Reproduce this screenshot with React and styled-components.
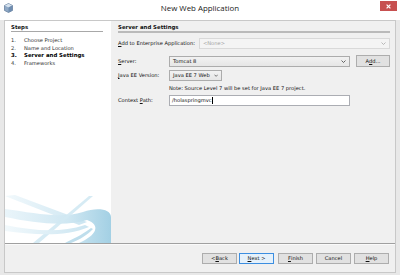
import React from "react";
import styled, { createGlobalStyle } from "styled-components";

const GlobalStyle = createGlobalStyle`
  html, body { margin: 0; padding: 0; }
  body {
    width: 400px; height: 275px; overflow: hidden; background: #fff;
    font-family: "DejaVu Sans", Verdana, sans-serif;
    color: #111;
  }
  #root { width: 400px; height: 275px; }
`;

const Window = styled.div`
  width: 400px; height: 275px; box-sizing: border-box;
  display: flex; flex-direction: column;
  background: #e8e8e8;
`;

const TitleBar = styled.div`
  height: 20px; flex: none; background: #fff;
  display: grid; grid-template-columns: 1fr auto 1fr; align-items: start;
`;

const AppIcon = styled.svg`
  display: block; margin: 3px 0 0 4px;
`;

const Title = styled.div`
  font-family: "Open Sans", "Noto Sans", sans-serif;
  font-size: 7.9px; line-height: 10px; color: #222;
  margin-top: 3px; white-space: nowrap;
`;

const CloseButton = styled.div`
  justify-self: end; margin: 1px 3px 0 0;
  width: 17px; height: 10px; background: #c75050;
  display: flex; align-items: center; justify-content: center;
`;

const Frame = styled.div`
  flex: 1; min-height: 0; display: flex; padding: 0 4px 2px;
`;

const Client = styled.div`
  flex: 1; min-width: 0; display: flex; flex-direction: column;
  background: #f0f0f0; border: 1px solid #c8c8c8;
`;

const Main = styled.div`
  flex: 1; min-height: 0; display: flex;
`;

const StepsPanel = styled.div`
  width: 106px; flex: none; box-sizing: border-box;
  background: #fff; display: flex; flex-direction: column;
  padding-top: 2px; overflow: hidden;
`;

const StepsTitle = styled.div`
  margin: 0 8px 0 6px; font-weight: bold; font-size: 5.4px; line-height: 8px;
  border-bottom: 1px solid #a8a8a8; color: #111;
`;

const StepList = styled.ol`
  list-style: none; margin: 5px 0 0 6px; padding: 0;
`;

const Step = styled.li`
  display: flex; font-size: ${p => (p.$current ? "5.4px" : "5.15px")};
  font-weight: ${p => (p.$current ? "bold" : "normal")};
  line-height: 7.6px; color: ${p => (p.$current ? "#000" : "#2e2e2e")};
  white-space: nowrap;
`;

const StepNo = styled.span`
  width: 13px; flex: none;
`;

const Swoosh = styled.svg`
  display: block; margin-top: auto; flex: none;
`;

const Content = styled.div`
  flex: 1; min-width: 0; padding: 2px 5px 0 7px;
  display: flex; flex-direction: column;
`;

const SectionTitle = styled.div`
  font-weight: bold; font-size: 5.4px; line-height: 8px; color: #111;
  border-bottom: 2px solid #bababa;
`;

const EnterpriseRow = styled.div`
  display: flex; align-items: center; gap: 4px; margin-top: 5px;
`;

const Label = styled.label`
  font-size: 5.15px; line-height: 7px; white-space: nowrap; color: #111;
`;

const Key = styled.span`
  text-decoration: underline; text-underline-offset: 0.5px;
  text-decoration-thickness: 0.5px;
`;

const Grid = styled.div`
  display: grid; grid-template-columns: 45px 1fr 34px;
  column-gap: 6px; row-gap: 3px; margin-top: 6px; align-items: center;
`;

const Combo = styled.div`
  box-sizing: border-box; height: 11px;
  width: ${p => (p.$width ? p.$width + "px" : "auto")};
  flex: ${p => (p.$grow ? 1 : "none")};
  display: flex; align-items: center; justify-content: space-between;
  padding: 0 3px 0 3px; gap: 4px;
  font-size: 5.15px; line-height: 7px; white-space: nowrap;
  border: 1px solid ${p => (p.$disabled ? "#d9d9d9" : "#acacac")};
  background: ${p => (p.$disabled ? "#f4f4f4" : "linear-gradient(#f2f2f2, #e6e6e6)")};
  color: ${p => (p.$disabled ? "#a3a3a3" : "#111")};
`;

const Chevron = ({ color }) => (
  <svg width="5" height="3" viewBox="0 0 5 3">
    <polyline points="0.5,0.5 2.5,2.5 4.5,0.5" fill="none" stroke={color} strokeWidth="0.8" />
  </svg>
);

const SmallButton = styled.div`
  box-sizing: border-box; height: 12px;
  display: flex; align-items: center; justify-content: center;
  font-size: 5.15px; line-height: 7px; white-space: nowrap;
  border: 1px solid #adadad; background: #e1e1e1;
`;

const Note = styled.div`
  grid-column: 2 / 4; font-size: 5.15px; line-height: 8px; white-space: nowrap;
  color: #111;
`;

const TextField = styled.div`
  box-sizing: border-box; height: 11px; display: flex; align-items: center;
  padding: 0 2px; font-size: 5.15px; line-height: 7px; white-space: nowrap;
  border: 1px solid #abadb3; background: #fff;
`;

const Caret = styled.span`
  display: inline-block; width: 1px; height: 7px; background: #000; margin-left: 0.5px;
`;

const Separator = styled.div`
  flex: none; height: 1px; background: #a0a0a0; border-bottom: 1px solid #fafafa;
`;

const Footer = styled.div`
  flex: none; height: 27px; box-sizing: border-box;
  display: flex; justify-content: flex-end; align-items: flex-start;
  padding: 8px 6px 0 0;
`;

const DialogButton = styled.div`
  box-sizing: border-box; width: 35px; height: 11px;
  margin-left: ${p => p.$gap}px;
  display: flex; align-items: center; justify-content: center;
  font-size: 5.15px; line-height: 7px; white-space: nowrap; color: #111;
  border: 1px solid ${p => (p.$default ? "#3c8ee0" : "#adadad")};
  background: ${p => (p.$default ? "#e5f1fb" : "#e1e1e1")};
`;

const steps = [
  { n: "1.", t: "Choose Project" },
  { n: "2.", t: "Name and Location" },
  { n: "3.", t: "Server and Settings", current: true },
  { n: "4.", t: "Frameworks" },
];

export default function App() {
  return (
    <>
      <GlobalStyle />
      <Window>
        <TitleBar>
          <AppIcon width="9" height="10" viewBox="0 0 9 10">
            <path d="M4.5 0.5 L8.5 2.5 L8.5 7.5 L4.5 9.5 L0.5 7.5 L0.5 2.5 Z" fill="#8fa9c6" stroke="#5d7696" strokeWidth="0.7" />
            <path d="M0.8 2.6 L4.5 4.5 L8.2 2.6 L4.5 0.8 Z" fill="#d6e2ee" />
            <path d="M4.5 4.5 L8.2 2.6 L8.2 7.4 L4.5 9.2 Z" fill="#6f8db0" />
          </AppIcon>
          <Title>New Web Application</Title>
          <CloseButton>
            <svg width="5" height="5" viewBox="0 0 5 5">
              <path d="M0.6 0.6 L4.4 4.4 M4.4 0.6 L0.6 4.4" stroke="#fff" strokeWidth="1.2" />
            </svg>
          </CloseButton>
        </TitleBar>
        <Frame>
          <Client>
            <Main>
              <StepsPanel>
                <StepsTitle>Steps</StepsTitle>
                <StepList>
                  {steps.map(s => (
                    <Step key={s.n} $current={s.current}>
                      <StepNo>{s.n}</StepNo>
                      {s.t}
                    </Step>
                  ))}
                </StepList>
                <Swoosh width="106" height="48" viewBox="0 0 106 48">
                  <defs>
                    <linearGradient id="sw" x1="0" y1="0" x2="1" y2="0">
                      <stop offset="0" stopColor="#eaf5fa" />
                      <stop offset="0.6" stopColor="#cfe7f2" />
                      <stop offset="1" stopColor="#a3d0e4" />
                    </linearGradient>
                    <linearGradient id="sw2" x1="0" y1="0" x2="1" y2="0">
                      <stop offset="0" stopColor="#f2f9fc" />
                      <stop offset="1" stopColor="#cbe5f1" />
                    </linearGradient>
                  </defs>
                  <path d="M0 1 L10 0 L82 27 L74 30 Z" fill="url(#sw2)" />
                  <path d="M0 14 C30 18 55 24 78 17 C92 12 106 14 106 22 L106 48 L74 48 C92 40 96 30 82 25 C60 32 30 28 0 22 Z" fill="url(#sw)" />
                  <path d="M84 1 L88 1 L34 48 L28 48 Z" fill="#d2e9f3" opacity="0.9" />
                  <path d="M0 30 C30 36 55 38 80 30 L84 32 C60 42 30 40 0 36 Z" fill="url(#sw2)" />
                  <path d="M60 48 C72 42 80 38 86 33 L88 34 C82 40 76 44 66 48 Z" fill="#bfdeec" />
                </Swoosh>
              </StepsPanel>
              <Content>
                <SectionTitle>Server and Settings</SectionTitle>
                <EnterpriseRow>
                  <Label><Key>A</Key>dd to Enterprise Application:</Label>
                  <Combo $grow $disabled>
                    <span>&lt;None&gt;</span>
                    <Chevron color="#a8a8a8" />
                  </Combo>
                </EnterpriseRow>
                <Grid>
                  <Label><Key>S</Key>erver:</Label>
                  <Combo>
                    <span>Tomcat 8</span>
                    <Chevron color="#404040" />
                  </Combo>
                  <SmallButton>A<Key>d</Key>d...</SmallButton>

                  <Label><Key>J</Key>ava EE Version:</Label>
                  <div>
                    <Combo $width={53}>
                      <span>Java EE 7 Web</span>
                      <Chevron color="#404040" />
                    </Combo>
                  </div>
                  <div />

                  <div />
                  <Note>Note: Source Level 7 will be set for Java EE 7 project.</Note>

                  <Label>Context <Key>P</Key>ath:</Label>
                  <TextField>/holaspringmvc<Caret /></TextField>
                  <div />
                </Grid>
              </Content>
            </Main>
            <Separator />
            <Footer>
              <DialogButton $gap={0}>&lt; <Key>B</Key>ack</DialogButton>
              <DialogButton $gap={2} $default><Key>N</Key>ext &gt;</DialogButton>
              <DialogButton $gap={4}><Key>F</Key>inish</DialogButton>
              <DialogButton $gap={3}>Cancel</DialogButton>
              <DialogButton $gap={3}><Key>H</Key>elp</DialogButton>
            </Footer>
          </Client>
        </Frame>
      </Window>
    </>
  );
}
